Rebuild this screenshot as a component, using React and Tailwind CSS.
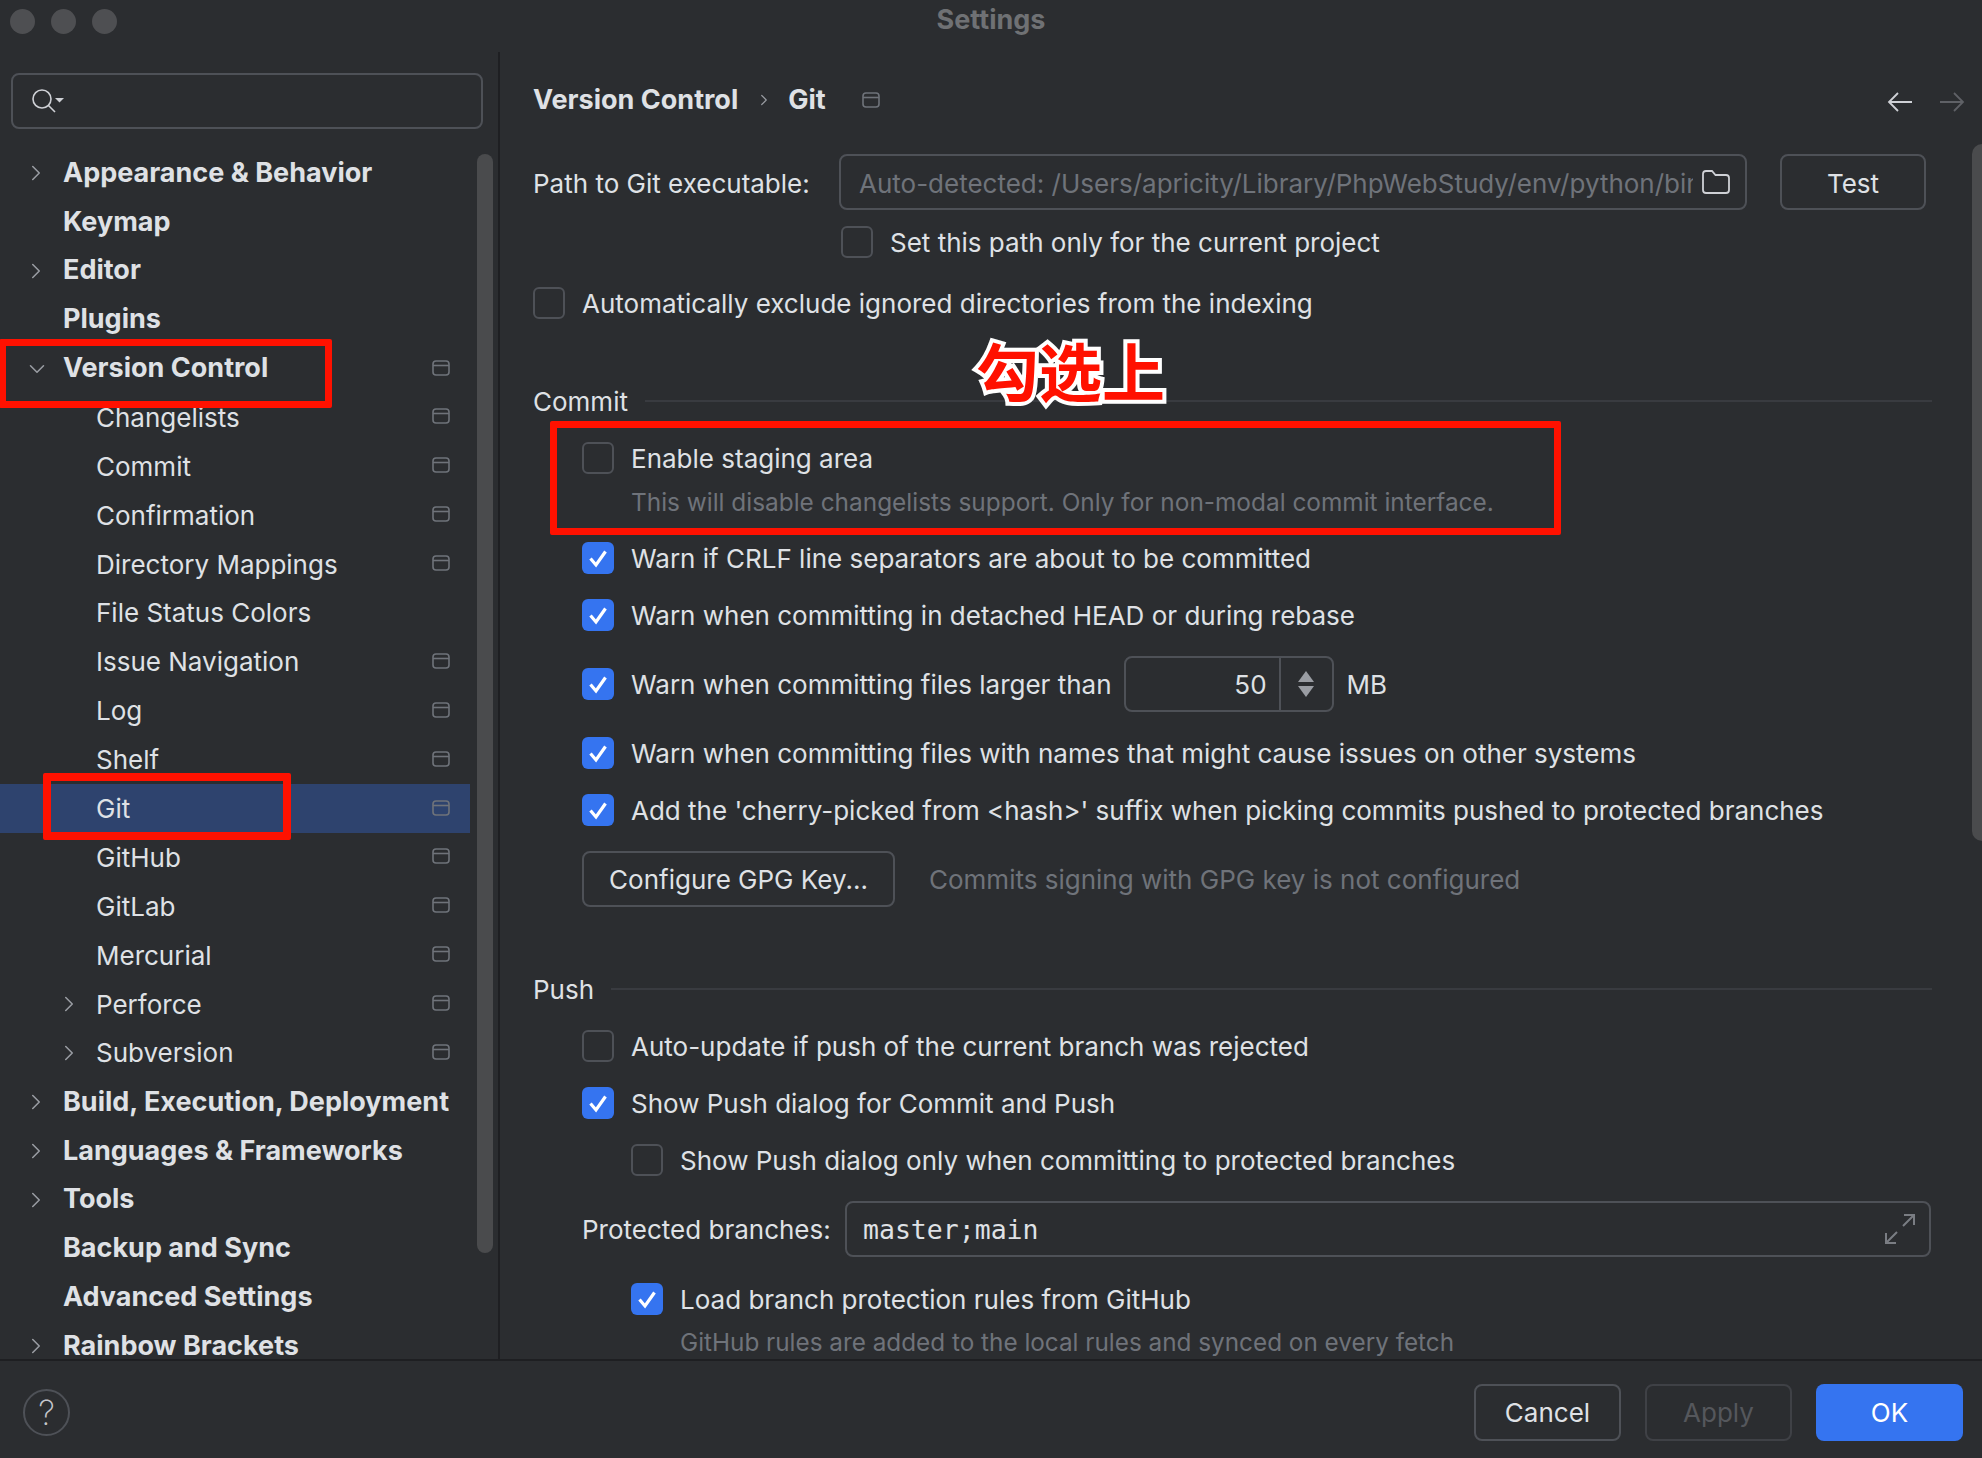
import React from "react";
import { ChevronRight, ChevronDown } from "lucide-react";

const font = { fontFamily: "Inter, 'Noto Sans', sans-serif" };

const tree = [
  { label: "Appearance & Behavior", top: true, arrow: "right" },
  { label: "Keymap", top: true },
  { label: "Editor", top: true, arrow: "right" },
  { label: "Plugins", top: true },
  { label: "Version Control", top: true, arrow: "down", pin: true },
  { label: "Changelists", pin: true },
  { label: "Commit", pin: true },
  { label: "Confirmation", pin: true },
  { label: "Directory Mappings", pin: true },
  { label: "File Status Colors" },
  { label: "Issue Navigation", pin: true },
  { label: "Log", pin: true },
  { label: "Shelf", pin: true },
  { label: "Git", pin: true, selected: true },
  { label: "GitHub", pin: true },
  { label: "GitLab", pin: true },
  { label: "Mercurial", pin: true },
  { label: "Perforce", pin: true, arrow: "right" },
  { label: "Subversion", pin: true, arrow: "right" },
  { label: "Build, Execution, Deployment", top: true, arrow: "right" },
  { label: "Languages & Frameworks", top: true, arrow: "right" },
  { label: "Tools", top: true, arrow: "right" },
  { label: "Backup and Sync", top: true },
  { label: "Advanced Settings", top: true },
  { label: "Rainbow Brackets", top: true, arrow: "right" },
];

const PinIcon = ({ className }) => (
  <svg width="18" height="16" viewBox="0 0 18 16" fill="none" className={className}>
    <rect x="1" y="1" width="16" height="14" rx="3" stroke="#6f737a" strokeWidth="1.6" />
    <path d="M1 5.5H17" stroke="#6f737a" strokeWidth="1.6" />
  </svg>
);

const TreeRow = ({ item }) => (
  <div className={`relative flex h-[48.9px] shrink-0 items-center w-[470px] ${item.selected ? "bg-[#2e436e]" : ""}`}>
    {item.arrow === "right" && (
      <ChevronRight
        size={26}
        strokeWidth={1.4}
        color="#9a9da3"
        className={`absolute ${item.top ? "left-[23px]" : "left-[56px]"}`}
      />
    )}
    {item.arrow === "down" && <ChevronDown size={26} strokeWidth={1.4} color="#9a9da3" className="absolute left-[24px]" />}
    <span
      className={`text-[#dfe1e5] whitespace-nowrap ${
        item.top ? "pl-[63px] text-[27px] font-bold" : "pl-[96px] text-[26px]"
      }`}
    >
      {item.label}
    </span>
    {item.pin && <PinIcon className="absolute left-[432px] -translate-y-[1px]" />}
  </div>
);

const Check = ({ checked, className = "" }) =>
  checked ? (
    <span className={`flex h-[32px] w-[32px] shrink-0 items-center justify-center rounded-[6px] bg-[#3574f0] ${className}`}>
      <svg width="24" height="24" viewBox="0 0 24 24" fill="none">
        <path d="M4.5 12.5L10 19L19.5 5.5" stroke="#fff" strokeWidth="3.2" />
      </svg>
    </span>
  ) : (
    <span className={`block h-[32px] w-[32px] shrink-0 rounded-[6px] border-2 border-[#4e5157] ${className}`} />
  );

const CheckRow = ({ checked, children, className = "" }) => (
  <div className={`flex h-[32px] items-center ${className}`}>
    <Check checked={checked} />
    <span className="ml-[17px] whitespace-nowrap pt-[1px] text-[26px] text-[#dfe1e5]">{children}</span>
  </div>
);

const Section = ({ title, className = "" }) => (
  <div className={`flex h-[32px] items-center ${className}`}>
    <span className="pt-[1px] text-[26px] text-[#dfe1e5]">{title}</span>
    <div className="ml-[17px] h-[2px] flex-1 bg-[#393b40]" />
  </div>
);

const FooterButton = ({ children, className = "" }) => (
  <button className={`h-[57px] w-[147px] rounded-[8px] text-[26px] ${className}`}>{children}</button>
);

export default function App() {
  return (
    <div style={font} className="relative flex h-[1458px] w-[1982px] flex-col overflow-hidden bg-[#2b2d30]">
      {/* title bar */}
      <div className="relative flex h-[42px] shrink-0 items-center justify-center">
        <div className="absolute left-[10px] top-[9px] flex gap-[16px]">
          <span className="h-[25px] w-[25px] rounded-full bg-[#4e4f52]" />
          <span className="h-[25px] w-[25px] rounded-full bg-[#4e4f52]" />
          <span className="h-[25px] w-[25px] rounded-full bg-[#4e4f52]" />
        </div>
        <span className="-mt-[1px] text-[27px] font-bold text-[#6f7174]">Settings</span>
      </div>

      <div className="flex min-h-0 flex-1">
        {/* sidebar */}
        <div className="relative flex w-[498px] shrink-0 flex-col overflow-hidden">
          <div className="ml-[11px] mt-[31px] flex h-[56px] w-[472px] shrink-0 items-center rounded-[8px] border-2 border-[#4e5157] pl-[18px]">
            <svg width="36" height="28" viewBox="0 0 36 28" fill="none">
              <circle cx="11" cy="12" r="9" stroke="#cfd1d6" strokeWidth="1.6" />
              <path d="M17.5 18.5L24 25" stroke="#cfd1d6" strokeWidth="1.6" />
              <path d="M24 11H33L28.5 15.5Z" fill="#cfd1d6" />
            </svg>
          </div>
          <div className="mt-[19.5px] flex flex-col">
            {tree.map((item) => (
              <TreeRow key={item.label} item={item} />
            ))}
          </div>
          <div className="absolute left-[477px] top-[112px] h-[1099px] w-[16px] rounded-full bg-[#4a4b4d]" />
        </div>
        <div className="mt-[10px] w-[2px] shrink-0 bg-[#1e1f22]" />

        {/* settings page */}
        <div className="relative min-w-0 flex-1 overflow-hidden pl-[33px] pr-[50px]">
          <div className="flex h-[112px] items-center pt-[4px]">
            <span className="pt-[1px] text-[27px] font-bold text-[#dfe1e5]">Version Control</span>
            <ChevronRight size={18} strokeWidth={1.6} color="#9a9da3" className="ml-[17px]" />
            <span className="ml-[15px] pt-[1px] text-[27px] font-bold text-[#dfe1e5]">Git</span>
            <PinIcon className="ml-[36px]" />
            <div className="ml-auto mr-[-34px] mt-[3px] flex gap-[24px]">
              <svg width="28" height="24" viewBox="0 0 28 24" fill="none">
                <path d="M26 12H3M12 3L3 12L12 21" stroke="#cfd1d6" strokeWidth="1.8" />
              </svg>
              <svg width="28" height="24" viewBox="0 0 28 24" fill="none">
                <path d="M2 12H25M16 3L25 12L16 21" stroke="#5f6166" strokeWidth="1.8" />
              </svg>
            </div>
          </div>

          <div className="flex h-[56px] items-center">
            <span className="w-[306px] shrink-0 whitespace-nowrap pt-[3px] text-[26px] text-[#dfe1e5]">Path to Git executable:</span>
            <div className="flex h-[56px] w-[908px] shrink-0 items-center rounded-[8px] border-2 border-[#4e5157] pl-[18px] pr-[14px]">
              <span className="flex-1 overflow-hidden whitespace-nowrap pt-[3px] text-[26px] text-[#6f737a]">
                Auto-detected: /Users/apricity/Library/PhpWebStudy/env/python/bin/git
              </span>
              <svg width="30" height="26" viewBox="0 0 30 26" fill="none" className="ml-[8px] shrink-0">
                <path
                  d="M2 5C2 3 3 2 5 2H11L14.5 6H25C27 6 28 7 28 9V21C28 23 27 24 25 24H5C3 24 2 23 2 21Z"
                  stroke="#cfd1d6"
                  strokeWidth="1.8"
                />
              </svg>
            </div>
            <button className="ml-[33px] h-[56px] w-[146px] shrink-0 rounded-[8px] border-2 border-[#4e5157] pt-[3px] text-[26px] text-[#dfe1e5]">
              Test
            </button>
          </div>

          <CheckRow className="ml-[308px] mt-[16px]">Set this path only for the current project</CheckRow>
          <CheckRow className="mt-[29px]">Automatically exclude ignored directories from the indexing</CheckRow>

          <Section title="Commit" className="mt-[66px]" />
          <div className="ml-[49px]">
            <CheckRow className="mt-[25px]">Enable staging area</CheckRow>
            <div className="mt-[12px] flex h-[32px] items-center pl-[49px] text-[24.4px] text-[#6f737a]">
              This will disable changelists support. Only for non-modal commit interface.
            </div>
            <CheckRow checked className="mt-[24px]">Warn if CRLF line separators are about to be committed</CheckRow>
            <CheckRow checked className="mt-[25px]">Warn when committing in detached HEAD or during rebase</CheckRow>
            <div className="mt-[25px] flex h-[56px] items-center">
              <Check checked />
              <span className="ml-[17px] whitespace-nowrap pt-[1px] text-[26px] text-[#dfe1e5]">Warn when committing files larger than</span>
              <div className="ml-[12px] flex h-[56px] w-[210px] shrink-0 items-center rounded-[8px] border-2 border-[#4e5157]">
                <span className="w-[153px] pr-[12px] pt-[1px] text-right text-[26px] text-[#dfe1e5]">50</span>
                <div className="flex h-full flex-1 items-center justify-center border-l-2 border-[#4e5157]">
                  <svg width="20" height="34" viewBox="0 0 20 34" fill="none">
                    <path d="M10 4L18 15H2Z" fill="#9a9da3" />
                    <path d="M10 30L18 19H2Z" fill="#9a9da3" />
                  </svg>
                </div>
              </div>
              <span className="ml-[13px] pt-[1px] text-[26px] text-[#dfe1e5]">MB</span>
            </div>
            <CheckRow checked className="mt-[25px]">Warn when committing files with names that might cause issues on other systems</CheckRow>
            <CheckRow checked className="mt-[25px]">Add the 'cherry-picked from &lt;hash&gt;' suffix when picking commits pushed to protected branches</CheckRow>
            <div className="mt-[25px] flex h-[56px] items-center">
              <button className="h-[56px] w-[313px] shrink-0 rounded-[8px] border-2 border-[#4e5157] pt-[1px] text-[26px] text-[#dfe1e5]">
                Configure GPG Key...
              </button>
              <span className="ml-[34px] whitespace-nowrap pt-[1px] text-[26px] text-[#6f737a]">Commits signing with GPG key is not configured</span>
            </div>
          </div>

          <Section title="Push" className="mt-[66px]" />
          <div className="ml-[49px]">
            <CheckRow className="mt-[25px]">Auto-update if push of the current branch was rejected</CheckRow>
            <CheckRow checked className="mt-[25px]">Show Push dialog for Commit and Push</CheckRow>
            <CheckRow className="ml-[49px] mt-[25px]">Show Push dialog only when committing to protected branches</CheckRow>
            <div className="mt-[25px] flex h-[56px] items-center">
              <span className="w-[263px] shrink-0 whitespace-nowrap pt-[1px] text-[26px] text-[#dfe1e5]">Protected branches:</span>
              <div className="flex h-[56px] w-[1086px] shrink-0 items-center justify-between rounded-[8px] border-2 border-[#4e5157] pl-[16px] pr-[13px]">
                <span className="pt-[1px] text-[26.5px] text-[#dfe1e5] [font-family:'DejaVu_Sans_Mono','Liberation_Mono',monospace]">master;main</span>
                <svg width="32" height="32" viewBox="0 0 32 32" fill="none">
                  <path d="M20 2H30V12M30 2L19 13M12 30H2V20M2 30L13 19" stroke="#7a7d83" strokeWidth="2" />
                </svg>
              </div>
            </div>
            <CheckRow checked className="ml-[49px] mt-[26px]">Load branch protection rules from GitHub</CheckRow>
            <div className="ml-[98px] mt-[11px] flex h-[32px] items-center whitespace-nowrap text-[24.3px] text-[#6f737a]">
              GitHub rules are added to the local rules and synced on every fetch
            </div>
          </div>

          <div className="absolute right-0 top-[102px] h-[697px] w-[10px] rounded-l-full bg-[#4a4b4d]" />
        </div>
      </div>

      {/* footer */}
      <div className="flex h-[99px] shrink-0 items-center border-t-2 border-[#1e1f22] pl-[23px] pr-[19px] pt-[6px]">
        <div className="flex h-[47px] w-[47px] items-center justify-center rounded-full border-2 border-[#4e5157] text-[34px] font-extralight text-[#c4c6cb]">
          ?
        </div>
        <div className="ml-auto flex gap-[24px]">
          <FooterButton className="border-2 border-[#4e5157] text-[#dfe1e5]">Cancel</FooterButton>
          <FooterButton className="border-2 border-[#3f4146] text-[#55575c]">Apply</FooterButton>
          <FooterButton className="bg-[#3574f0] text-white">OK</FooterButton>
        </div>
      </div>

      {/* annotations drawn on top of the screenshot */}
      <div className="absolute left-[-1px] top-[339px] h-[69px] w-[333px] rounded-[2px] border-[7px] border-[#ff1100]" />
      <div className="absolute left-[43px] top-[773px] h-[67px] w-[248px] rounded-[2px] border-[8px] border-[#ff1100]" />
      <div className="absolute left-[550px] top-[421px] h-[114px] w-[1011px] rounded-[2px] border-[7px] border-[#ff1100]" />
      <div className="absolute left-[976px] top-[324px] text-[63px] font-bold leading-[90px] whitespace-nowrap text-[#ff1100] [-webkit-text-stroke:8px_white] [font-family:'Noto_Sans_CJK_SC',sans-serif] [paint-order:stroke_fill]">
        勾选上
      </div>
    </div>
  );
}
